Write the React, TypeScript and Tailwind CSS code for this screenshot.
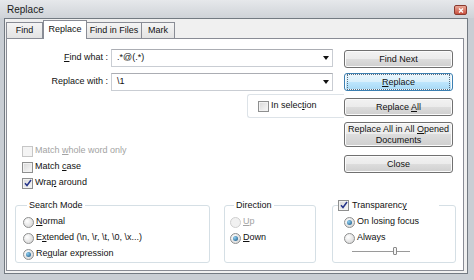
import React from 'react'

// Notepad++ style Replace dialog (Windows 7 look)

const Check = ({ checked = false, disabled = false }: { checked?: boolean; disabled?: boolean }) => (
    <span
        className={`w-[11px] h-[11px] shrink-0 flex items-center justify-center border ${disabled ? 'border-[#c6c6c6] bg-[#f4f4f4]' : 'border-[#8e8f8f] bg-[linear-gradient(135deg,#d8d8d8,#f9f9f9)] shadow-[inset_0_0_0_1px_#f2f2f2]'}`}
    >
        {checked && (
            <svg width="8" height="8" viewBox="0 0 8 8">
                <path d="M1 4.2l2 2.3L7 1" stroke="#26358a" strokeWidth="1.5" fill="none" />
            </svg>
        )}
    </span>
)

const Radio = ({ checked = false, disabled = false }: { checked?: boolean; disabled?: boolean }) => (
    <span
        className={`w-[11px] h-[11px] shrink-0 rounded-full flex items-center justify-center border ${disabled ? 'border-[#cfcfcf] bg-[#f1f1f1]' : 'border-[#8e8f8f] bg-[radial-gradient(circle_at_35%_35%,#ffffff,#d0d0d0)]'}`}
    >
        {checked && <span className="w-[5px] h-[5px] rounded-full bg-[radial-gradient(circle_at_35%_35%,#8fd0f3,#15507d)]" />}
    </span>
)

const Button = ({ children, focused = false, className = '' }: { children: React.ReactNode; focused?: boolean; className?: string }) => (
    <div
        className={`w-[109px] flex items-center justify-center text-center leading-[11px] rounded-[3px] border ${focused ? 'border-[#3c7fb1] bg-[linear-gradient(#eaf6fd,#d9f0fc_50%,#bee6fd_50%,#a7d9f5)]' : 'border-[#707070] bg-[linear-gradient(#f2f2f2,#ebebeb_50%,#dddddd_50%,#cfcfcf)]'} shadow-[inset_0_0_0_1px_#fbfbfb] ${className}`}
    >
        {focused ? (
            <div className="w-full h-full m-[2px] flex items-center justify-center border border-dotted border-[#5a6e80]">{children}</div>
        ) : (
            children
        )}
    </div>
)

const Combo = ({ value }: { value: string }) => (
    <div className="w-[222px] h-[18px] ml-[3px] flex items-center justify-between bg-white border border-[#c9cdd3] border-t-[#abadb3] pl-[5px] pr-[3px]">
        <span>{value}</span>
        <svg width="6" height="4" viewBox="0 0 6 4">
            <path d="M0 0h6L3 4z" fill="#111" />
        </svg>
    </div>
)

export default function App() {
    return (
        <div className="w-[474px] h-[280px] flex flex-col bg-[#c9ced4] font-['Liberation_Sans',Arial,sans-serif] text-[9px] text-[#111]">
            {/* title bar */}
            <div className="h-[18px] flex items-center justify-between pl-[7px] pr-[7px] bg-[linear-gradient(#e6e8eb,#cfd3d8)]">
                <span className="text-[10px] text-[#1a1a1a]">Replace</span>
                <div className="w-[13px] h-[10px] mt-[2px] rounded-[2px] border border-[#8a3a30] bg-[linear-gradient(#e9a999,#c9503f)] flex items-center justify-center">
                    <svg width="6" height="5" viewBox="0 0 6 5">
                        <path d="M1 0.5l4 4M5 0.5l-4 4" stroke="#fff" strokeWidth="1.3" />
                    </svg>
                </div>
            </div>

            {/* dialog body */}
            <div className="flex-1 ml-[4px] mr-[6px] mb-[6px] flex flex-col border border-[#737a82] bg-[#f0f0f0] pl-[1px] pr-[3px] pb-[2px]">
                {/* tabs */}
                <div className="h-[19px] flex items-end">
                    <div className="w-[37px] h-[16px] flex items-center justify-center border border-b-0 border-[#898c95] bg-[linear-gradient(#f4f4f4,#e3e3e3)]">Find</div>
                    <div className="w-[44px] h-[19px] -mb-px relative z-10 flex items-center justify-center border border-b-0 border-[#898c95] bg-white">Replace</div>
                    <div className="w-[55px] h-[16px] flex items-center justify-center border border-b-0 border-l-0 border-[#898c95] bg-[linear-gradient(#f4f4f4,#e3e3e3)]">Find in Files</div>
                    <div className="w-[33px] h-[16px] flex items-center justify-center border border-b-0 border-l-0 border-[#898c95] bg-[linear-gradient(#f4f4f4,#e3e3e3)]">Mark</div>
                </div>

                {/* tab page */}
                <div className="flex-1 flex flex-col border border-[#898c95] bg-white">
                    <div className="h-[160px] flex">
                        <div className="w-[337px] flex flex-col">
                            <div className="mt-[10px] h-[18px] flex items-center">
                                <span className="w-[101px] text-right"><u>F</u>ind what :</span>
                                <Combo value=".*@(.*)" />
                            </div>
                            <div className="mt-[6px] h-[18px] flex items-center">
                                <span className="w-[101px] text-right">Replace with :</span>
                                <Combo value="\1" />
                            </div>
                            <div className="mt-[3px] ml-[240px] w-[97px] h-[24px] flex items-center gap-[2px] pl-[10px] border border-r-0 border-[#dde3e8] rounded-l-[3px]">
                                <Check />
                                <span>In selec<u>t</u>ion</span>
                            </div>
                            <div className="mt-[25px] pl-[15px] flex flex-col">
                                <div className="h-[16px] flex items-center gap-[2px] text-[#a3a3a3]">
                                    <Check disabled />
                                    <span>Match <u>w</u>hole word only</span>
                                </div>
                                <div className="h-[16px] flex items-center gap-[2px]">
                                    <Check />
                                    <span>Match <u>c</u>ase</span>
                                </div>
                                <div className="h-[16px] flex items-center gap-[2px]">
                                    <Check checked />
                                    <span>Wra<u>p</u> around</span>
                                </div>
                            </div>
                        </div>
                        <div className="flex flex-col">
                            <Button className="mt-[11px] h-[18px]">Find Next</Button>
                            <Button focused className="mt-[5px] h-[18px]"><span><u>R</u>eplace</span></Button>
                            <Button className="mt-[7px] h-[18px]"><span>Replace <u>A</u>ll</span></Button>
                            <Button className="mt-[6px] h-[25px]"><span>Replace All in All <u>O</u>pened<br />Documents</span></Button>
                            <Button className="mt-[8px] h-[18px]">Close</Button>
                        </div>
                    </div>

                    {/* group boxes */}
                    <div className="flex">
                        <fieldset className="ml-[8px] w-[195px] h-[64px] border border-[#d5dfe5] rounded-[3px] pt-[3px] pl-[7px]">
                            <legend className="ml-[4px] px-[2px] leading-[12px]">Search Mode</legend>
                            <div className="h-[16px] flex items-center gap-[2px]"><Radio /><span><u>N</u>ormal</span></div>
                            <div className="h-[16px] flex items-center gap-[2px]"><Radio /><span>E<u>x</u>tended (\n, \r, \t, \0, \x...)</span></div>
                            <div className="h-[16px] flex items-center gap-[2px]"><Radio checked /><span>Re<u>g</u>ular expression</span></div>
                        </fieldset>
                        <fieldset className="ml-[14px] w-[92px] h-[64px] border border-[#d5dfe5] rounded-[3px] pt-[3px] pl-[5px]">
                            <legend className="ml-[4px] px-[2px] leading-[12px]">Direction</legend>
                            <div className="h-[16px] flex items-center gap-[2px] text-[#a3a3a3]"><Radio disabled /><span><u>U</u>p</span></div>
                            <div className="h-[16px] flex items-center gap-[2px]"><Radio checked /><span><u>D</u>own</span></div>
                        </fieldset>
                        <fieldset className="ml-[16px] w-[124px] h-[64px] border border-[#d5dfe5] rounded-[3px] pt-[3px] pl-[11px]">
                            <legend className="-ml-[6px] w-[101px] leading-[12px] flex items-center gap-[3px] bg-white">
                                <Check checked />
                                <span>Transparenc<u>y</u></span>
                            </legend>
                            <div className="h-[16px] flex items-center gap-[2px]"><Radio checked /><span>On losing focus</span></div>
                            <div className="h-[16px] flex items-center gap-[2px]"><Radio /><span>Always</span></div>
                            <div className="h-[10px] ml-[8px] flex items-center">
                                <span className="w-[41px] h-px bg-[#9a9a9a]" />
                                <span className="w-[4px] h-[8px] border border-[#8a8a8a] rounded-[1px] bg-[#f6f6f6]" />
                                <span className="w-[13px] h-px bg-[#9a9a9a]" />
                            </div>
                        </fieldset>
                    </div>
                </div>
            </div>
        </div>
    )
}
